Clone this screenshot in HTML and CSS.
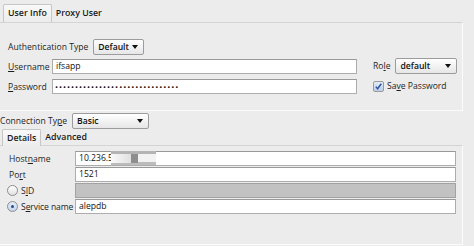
FILE: index.html
```html
<!DOCTYPE html>
<html>
<head>
<meta charset="utf-8">
<link rel="stylesheet" href="styles.css">
</head>
<body>
<div class="tabs">
  <div class="tab active">User Info</div>
  <div class="tab">Proxy User</div>
</div>
<div class="panel top-panel">
  <div class="row auth-row">
    <span class="label">Authentication Type</span>
    <div class="select sel-auth">Default<span class="arrow"></span></div>
  </div>
  <div class="cred">
    <div class="cred-left">
      <div class="row field-row">
        <span class="label lw"><u>U</u>sername</span>
        <div class="input">ifsapp</div>
      </div>
      <div class="row field-row">
        <span class="label lw"><u>P</u>assword</span>
        <div class="input pw">•••••••••••••••••••••••••••••••</div>
      </div>
    </div>
    <div class="cred-right">
      <div class="row role-row">
        <span class="label">Ro<u>l</u>e</span>
        <div class="select sel-role">default<span class="arrow"></span></div>
      </div>
      <div class="row save-row">
        <span class="checkbox"><svg width="9" height="9" viewBox="0 0 9 9"><path d="M1.8 4.6 L3.6 6.8 L7.3 1.8" fill="none" stroke="#2f57a3" stroke-width="1.5"/></svg></span>
        <span class="label">Sa<u>v</u>e Password</span>
      </div>
    </div>
  </div>
</div>
<div class="row conn-row">
  <span class="label">Connection Ty<u>p</u>e</span>
  <div class="select sel-conn">Basic<span class="arrow"></span></div>
</div>
<div class="tabs tabs2">
  <div class="tab active">Details</div>
  <div class="tab">Advanced</div>
</div>
<div class="panel bottom-panel">
  <div class="grid">
    <span class="label">Host<u>n</u>ame</span>
    <div class="input host">10.236.5<span class="blur b1"></span><span class="blur b2"></span><span class="blur b3"></span></div>
    <span class="label">Po<u>r</u>t</span>
    <div class="input">1521</div>
    <span class="label radio-label"><span class="radio"></span>S<u>I</u>D</span>
    <div class="input disabled"></div>
    <span class="label radio-label"><span class="radio on"></span>S<u>e</u>rvice name</span>
    <div class="input">alepdb</div>
  </div>
</div>
</body>
</html>
```
FILE: styles.css
```css
html, body {
  margin: 0;
  padding: 0;
  background: #ececec;
  width: 474px;
  height: 246px;
  overflow: hidden;
  font-family: "Open Sans", "DejaVu Sans", sans-serif;
  font-size: 8.6px;
  font-weight: 500;
  color: #1e1e1e;
}
u { text-decoration: underline; text-underline-offset: 1px; }
.tabs {
  display: flex;
  padding: 4px 0 0 3px;
  height: 18px;
}
.tab {
  padding: 0 3px 0 4px;
  line-height: 18px;
  font-weight: 600;
  font-size: 8.8px;
  color: #1a1a1a;
}
.tab.active {
  background: linear-gradient(#f9f9f9, #ececec);
  border: 1px solid #c6c6c6;
  border-bottom: none;
  border-radius: 2px 2px 0 0;
  height: 17px;
  line-height: 17px;
  padding: 0 4px 0 4px;
}
.panel {
  border-top: 1px solid #d4d4d4;
  border-right: 1px solid #fbfbfb;
  border-bottom: 1px solid #fbfbfb;
  width: 463px;
  box-sizing: border-box;
}
.top-panel {
  height: 89px;
  padding: 16px 0 0 8px;
}
.row {
  display: flex;
  align-items: center;
}
.label { white-space: nowrap; }
.select {
  position: relative;
  box-sizing: border-box;
  height: 16px;
  line-height: 14px;
  border: 1px solid #9c9c9c;
  border-radius: 2px;
  background: linear-gradient(#ffffff, #e6e6e6);
  padding-left: 4px;
  font-weight: 600;
  font-size: 8.6px;
  color: #111;
}
.arrow {
  position: absolute;
  right: 5px;
  top: 5px;
  width: 0; height: 0;
  border-left: 3.5px solid transparent;
  border-right: 3.5px solid transparent;
  border-top: 4px solid #111;
}
.sel-auth { width: 51px; margin-left: 5px; }
.sel-role { width: 62px; margin-left: 5px; }
.sel-conn { width: 77px; margin-left: 5px; }
.cred {
  display: flex;
  margin-top: 4px;
}
.cred-left { width: 349px; margin-right: 16px; }
.field-row { margin-bottom: 5px; }
.lw { width: 44px; }
.input {
  box-sizing: border-box;
  height: 15px;
  border: 1px solid #adadad;
  border-top-color: #999;
  background: #fff;
  line-height: 13px;
  padding-left: 3px;
  flex: 1;
  position: relative;
  color: #111;
}
.pw { letter-spacing: 1px; font-size: 8px; padding-left: 2px; }
.role-row { height: 16px; margin-top: -1px; }
.save-row { margin-top: 6px; }
.checkbox {
  width: 11px; height: 11px;
  box-sizing: border-box;
  border: 1px solid #9a9a9a;
  border-radius: 2px;
  background: linear-gradient(#e4ecf7, #bccde8);
  display: flex; align-items: center; justify-content: center;
  margin-right: 3px;
}
.conn-row { padding-top: 2px; height: 16px; }
.tabs2 { padding: 0 0 0 2px; height: 16px; }
.tabs2 .tab { line-height: 16px; }
.tabs2 .tab.active { height: 16px; line-height: 16px; }
.bottom-panel {
  height: 100px;
  padding: 5px 6px 0 9px;
}
.grid {
  display: grid;
  grid-template-columns: 66px 381px;
  row-gap: 1px;
  align-items: center;
}
.grid .input { height: 15px; }
.radio-label { display: flex; align-items: center; margin-left: -2px; letter-spacing: -0.1px; }
.radio {
  width: 11px; height: 11px;
  box-sizing: border-box;
  border: 1px solid #8c8c8c;
  border-radius: 50%;
  background: linear-gradient(#ffffff, #e2e2e2);
  margin-right: 3px;
  position: relative;
}
.radio.on {
  background: linear-gradient(#e6eef9, #c4d5ee);
}
.radio.on::after {
  content: "";
  position: absolute;
  left: 3px; top: 3px;
  width: 3px; height: 3px;
  border-radius: 50%;
  background: #2a4f8f;
}
.disabled { background: #c2c2c2; border-color: #a2a2a2; }
.blur { position: absolute; }
.b1 { left: 35px; width: 45px; top: -1px; height: 14px; background: linear-gradient(#b4b4b4 0 3px, #f2f2f2 3px 11px, #bcbcbc 11px); }
.b2 { left: 35px; width: 20px; top: 2px; height: 9px; background: linear-gradient(90deg, #fafafa, #e0e0e0); }
.b3 { left: 55px; width: 7px; top: 2px; height: 9px; background: #8e8e8e; }
```
